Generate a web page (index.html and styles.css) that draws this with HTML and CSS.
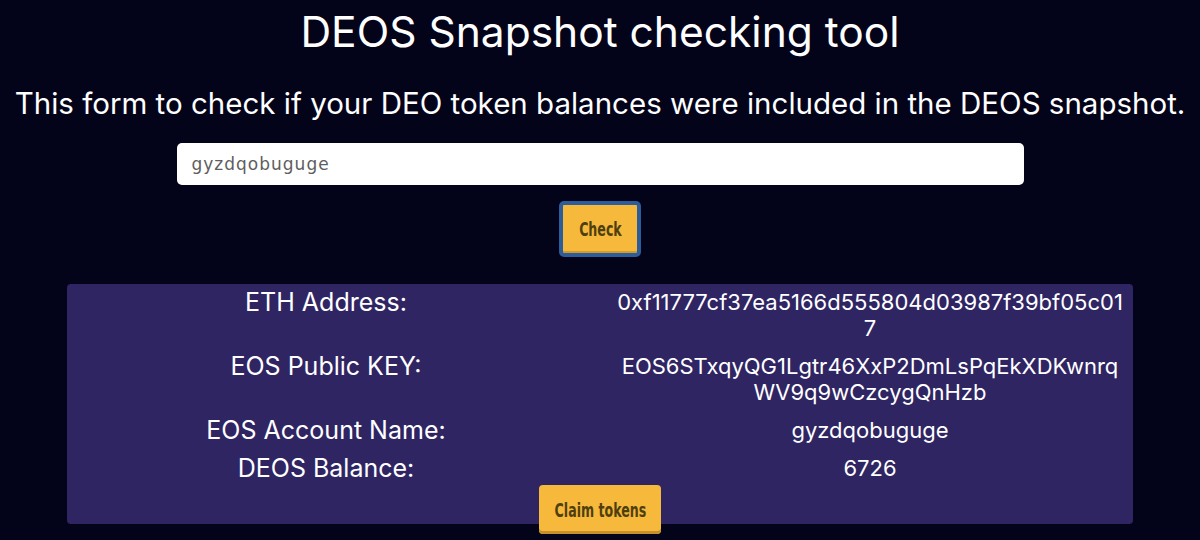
FILE: index.html
```html
<!DOCTYPE html>
<html lang="en">
<head>
    <meta charset="UTF-8">
    <meta name="viewport" content="width=device-width, initial-scale=1.0">
    <title>DEOS Snapshot checking tool</title>
    <link rel="stylesheet" href="styles.css">
</head>
<body>
    <h1>DEOS Snapshot checking tool</h1>
    <p class="intro">This form to check if your DEO token balances were included in the DEOS snapshot.</p>

    <!-- Account lookup -->
    <div class="lookup">
        <input type="text" id="accountName" class="account-input" value="gyzdqobuguge">
        <button class="btn btn-check"><span class="btn-text">Check</span></button>
    </div>

    <!-- Snapshot result -->
    <div class="result">
        <div class="result-row">
            <div class="result-label">ETH Address:</div>
            <div class="result-value">0xf11777cf37ea5166d555804d03987f39bf05c017</div>
        </div>
        <div class="result-row">
            <div class="result-label">EOS Public KEY:</div>
            <div class="result-value">EOS6STxqyQG1Lgtr46XxP2DmLsPqEkXDKwnrqWV9q9wCzcygQnHzb</div>
        </div>
        <div class="result-row">
            <div class="result-label">EOS Account Name:</div>
            <div class="result-value">gyzdqobuguge</div>
        </div>
        <div class="result-row">
            <div class="result-label">DEOS Balance:</div>
            <div class="result-value">6726</div>
        </div>
        <button class="btn btn-claim"><span class="btn-text">Claim tokens</span></button>
    </div>
</body>
</html>
```

FILE: styles.css
```css
body {
    font-family: Inter, 'Liberation Sans', sans-serif;
    margin: 0;
    padding: 0;
    color: #fff;
    background: #03031a;
    display: flex;
    flex-direction: column;
    align-items: center;
    min-height: 100vh;
}
h1 {
    font-size: 42.5px;
    font-weight: normal;
    margin: 8px 0 0;
    line-height: 48px;
}
.intro {
    font-size: 29.5px;
    margin: 30px 0 0;
    line-height: 34px;
}
.lookup {
    display: flex;
    flex-direction: column;
    align-items: center;
    width: 847px;
    margin-top: 23px;
}
.account-input {
    width: 100%;
    height: 42px;
    box-sizing: border-box;
    border: none;
    border-radius: 5px;
    padding: 0 15px;
    font-family: 'DejaVu Sans', sans-serif;
    font-size: 17px;
    letter-spacing: 1px;
    color: #5e5e5e;
    background: #fff;
    outline: none;
}
.btn {
    display: flex;
    align-items: center;
    justify-content: center;
    font-family: 'DejaVu Sans Condensed', 'DejaVu Sans', sans-serif;
    font-weight: bold;
    font-size: 20px;
    color: #4f3f10;
    background: #f7b93b;
    border: none;
    border-radius: 4px;
    cursor: pointer;
    flex-shrink: 0;
    white-space: nowrap;
    padding: 0;
}
/* narrow the label to a condensed look */
.btn-text {
    display: inline-block;
    transform: scaleX(0.7);
}
.btn-check {
    margin-top: 16px;
    width: 82px;
    height: 56px;
    border: 4px solid #2c5c9a;
    border-radius: 5px;
    box-shadow: inset 0 -2px 0 #d39a2c;
}
.result {
    width: 1066px;
    box-sizing: border-box;
    margin-top: 27px;
    padding-top: 5px;
    height: 240px;
    background: #2f2563;
    border-radius: 4px;
    display: flex;
    flex-direction: column;
    align-items: center;
}
.result-row {
    display: grid;
    grid-template-columns: 518px 510px;
    column-gap: 30px;
    width: 100%;
    margin-bottom: 12px;
}
.result-label {
    font-size: 25px;
    line-height: 26px;
    text-align: center;
}
.result-value {
    font-size: 22px;
    line-height: 26px;
    text-align: center;
    word-break: break-all;
}
.btn-claim {
    margin-top: -8px;
    width: 122px;
    height: 49px;
    box-shadow: inset 0 -3px 0 #c8902c;
}
```
